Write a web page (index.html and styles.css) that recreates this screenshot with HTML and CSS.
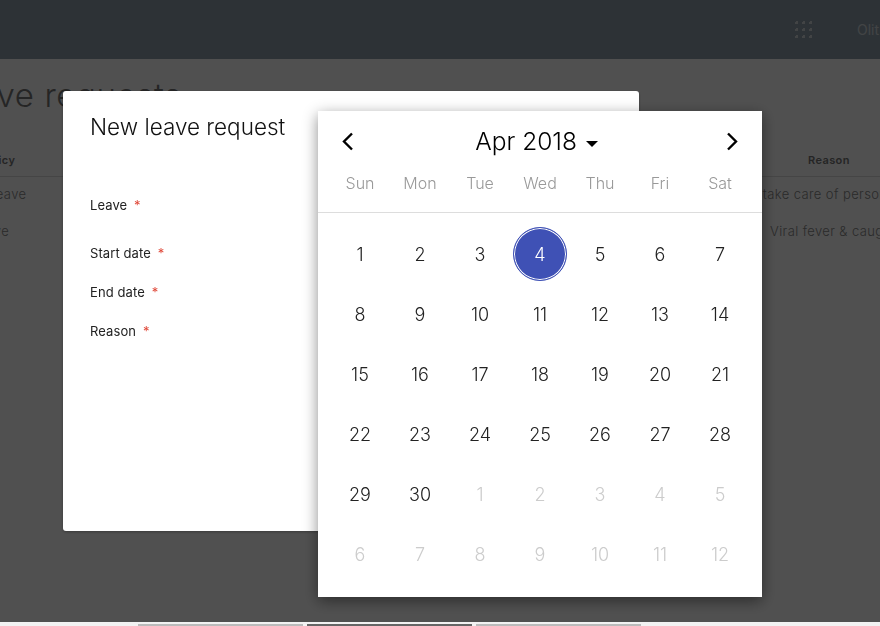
FILE: index.html
```html
<!DOCTYPE html>
<html lang="en">

<head>
    <meta charset="UTF-8">
    <title>New leave request</title>
    <link rel="stylesheet" href="styles.css">
</head>

<body>

    <div class="page">
        <header class="topbar">
            <svg class="apps-icon" width="20" height="20" viewBox="0 0 20 20">
                <path d="M2 1h2v3H1V2h1zM9 1h2v3H8V2h1zM16 1h2v3h-3V2h1zM2 8h2v3H1V9h1zM9 8h2v3H8V9h1zM16 8h2v3h-3V9h1zM2 15h2v3H1v-2h1zM9 15h2v3H8v-2h1zM16 15h2v3h-3v-2h1z" />
            </svg>
            <span class="user-name">Olit</span>
        </header>

        <main class="content">
            <h1 class="page-title">Leave requests</h1>
            <div class="table-head">
                <span class="col-policy">Leave policy</span>
                <span class="col-reason">Reason</span>
            </div>
            <div class="table-row">
                <span class="col-policy">Annual leave</span>
                <span class="col-reason first-reason">To take care of personal</span>
            </div>
            <div class="table-row">
                <span class="col-policy">Sick leave</span>
                <span class="col-reason second-reason">Viral fever &amp; caught</span>
            </div>
        </main>

        <div class="tabstrip">
            <span class="tab"></span><span class="tab active"></span><span class="tab"></span>
        </div>
    </div>

    <div class="overlay"></div>

    <div class="dialog">
        <h2 class="dialog-title">New leave request</h2>
        <div class="field first">Leave <span class="req">*</span></div>
        <div class="field">Start date <span class="req">*</span></div>
        <div class="field">End date <span class="req">*</span></div>
        <div class="field">Reason <span class="req">*</span></div>
    </div>

    <div class="picker">
        <div class="picker-head">
            <svg class="nav" width="24" height="24" viewBox="0 0 24 24">
                <path d="M16 4.5 8 12.5l8 8" />
            </svg>
            <div class="month">Apr 2018 <span class="caret"></span></div>
            <svg class="nav" width="24" height="24" viewBox="0 0 24 24">
                <path d="M8 4.5l8 8-8 8" />
            </svg>
        </div>
        <div class="weekdays">
            <span>Sun</span><span>Mon</span><span>Tue</span><span>Wed</span><span>Thu</span><span>Fri</span><span>Sat</span>
        </div>
        <div class="days">
            <span>1</span><span>2</span><span>3</span><span class="selected">4</span><span>5</span><span>6</span><span>7</span>
            <span>8</span><span>9</span><span>10</span><span>11</span><span>12</span><span>13</span><span>14</span>
            <span>15</span><span>16</span><span>17</span><span>18</span><span>19</span><span>20</span><span>21</span>
            <span>22</span><span>23</span><span>24</span><span>25</span><span>26</span><span>27</span><span>28</span>
            <span>29</span><span>30</span><span class="muted">1</span><span class="muted">2</span><span class="muted">3</span><span class="muted">4</span><span class="muted">5</span>
            <span class="muted">6</span><span class="muted">7</span><span class="muted">8</span><span class="muted">9</span><span class="muted">10</span><span class="muted">11</span><span class="muted">12</span>
        </div>
    </div>

</body>

</html>
```

FILE: styles.css
```css
* {
    box-sizing: border-box;
}

html,
body {
    height: 100%;
}

body {
    margin: 0;
    overflow: hidden;
    font-family: "Inter", "Noto Sans", sans-serif;
    font-weight: 300;
    color: #1a1a1a;
    background: #fff;
}

.page {
    height: 626px;
    display: flex;
    flex-direction: column;
}

.topbar {
    height: 59px;
    flex: none;
    display: flex;
    align-items: center;
    justify-content: flex-end;
    background: #8f9fac;
    overflow: hidden;
}

.apps-icon {
    fill: #fff;
    opacity: 0.6;
    margin-right: 43px;
}

.user-name {
    width: 23px;
    font-size: 14px;
    font-weight: 400;
    color: #fff;
    opacity: 0.6;
    white-space: nowrap;
}

.content {
    flex: 1;
    background: #fff;
    overflow: hidden;
}

.page-title {
    margin: 13px 0 0 -61px;
    font-size: 33px;
    line-height: 46px;
    font-weight: 300;
    letter-spacing: 0.6px;
    color: #777;
    white-space: nowrap;
}

.table-head,
.table-row {
    display: grid;
    grid-template-columns: 808px 1fr;
    align-items: center;
    white-space: nowrap;
    font-size: 13px;
    letter-spacing: 0.4px;
    color: #888;
}

.table-head {
    margin: 25px 0 -2px;
    height: 34px;
    border-bottom: 1px solid #ddd;
    font-size: 11px;
    font-weight: 600;
    color: #777;
}

.table-row {
    height: 37px;
}

.col-policy {
    margin-left: -56px;
}

.first-reason {
    margin-left: -65px;
}

.second-reason {
    margin-left: -38px;
}

.tabstrip {
    height: 4px;
    flex: none;
    display: flex;
    align-items: flex-end;
    padding-left: 138px;
    background: #f2f2f2;
}

.tab {
    width: 165px;
    height: 2px;
    margin-right: 4px;
    background: #bbb;
}

.tab.active {
    background: #666;
}

.overlay {
    position: fixed;
    top: 0;
    left: 0;
    right: 0;
    bottom: 4px;
    background: rgba(0, 0, 0, 0.686);
}

.dialog {
    position: fixed;
    left: 63px;
    top: 91px;
    width: 576px;
    height: 440px;
    padding: 22px 27px;
    background: #fff;
    border-radius: 3px;
    box-shadow: 0 1px 3px rgba(0, 0, 0, 0.3);
}

.dialog-title {
    margin: 0 0 56px;
    font-size: 22.5px;
    line-height: 28px;
    font-weight: 300;
    color: #111;
}

.field {
    font-size: 13px;
    line-height: 16px;
    font-weight: 400;
    letter-spacing: 0.1px;
    color: #222;
    margin-bottom: 23px;
}

.field.first {
    margin-bottom: 32px;
}

.req {
    color: #e0493a;
    margin-left: 3px;
}

.picker {
    position: fixed;
    left: 318px;
    top: 111px;
    width: 444px;
    height: 486px;
    background: #fff;
    box-shadow: 0 4px 14px rgba(0, 0, 0, 0.45);
}

.picker-head {
    display: flex;
    align-items: center;
    justify-content: space-between;
    height: 60px;
    padding: 0 18px;
}

.nav {
    fill: none;
    stroke: #000;
    stroke-width: 2.4;
}

.month {
    margin-right: 7px;
    font-size: 24.5px;
    font-weight: 300;
    color: #000;
}

.caret {
    display: inline-block;
    width: 0;
    height: 0;
    margin-left: 2px;
    vertical-align: 3px;
    border-left: 6px solid transparent;
    border-right: 6px solid transparent;
    border-top: 6px solid #000;
}

.weekdays,
.days {
    display: grid;
    grid-template-columns: repeat(7, 60px);
    padding: 0 12px;
    text-align: center;
}

.weekdays {
    height: 42px;
    border-bottom: 1px solid #ddd;
    font-size: 16px;
    line-height: 24px;
    color: #999;
}

.days {
    padding-top: 11px;
    grid-auto-rows: 60px;
    font-size: 18px;
    color: #222;
}

.days span {
    display: flex;
    align-items: center;
    justify-content: center;
}

.days .muted {
    color: #ccc;
}

.days .selected {
    width: 54px;
    height: 54px;
    margin: 3px;
    border-radius: 50%;
    color: #fff;
    background: #3f51b5;
    border: 1px solid #3f51b5;
    box-shadow: inset 0 0 0 1px #fff;
}
```
